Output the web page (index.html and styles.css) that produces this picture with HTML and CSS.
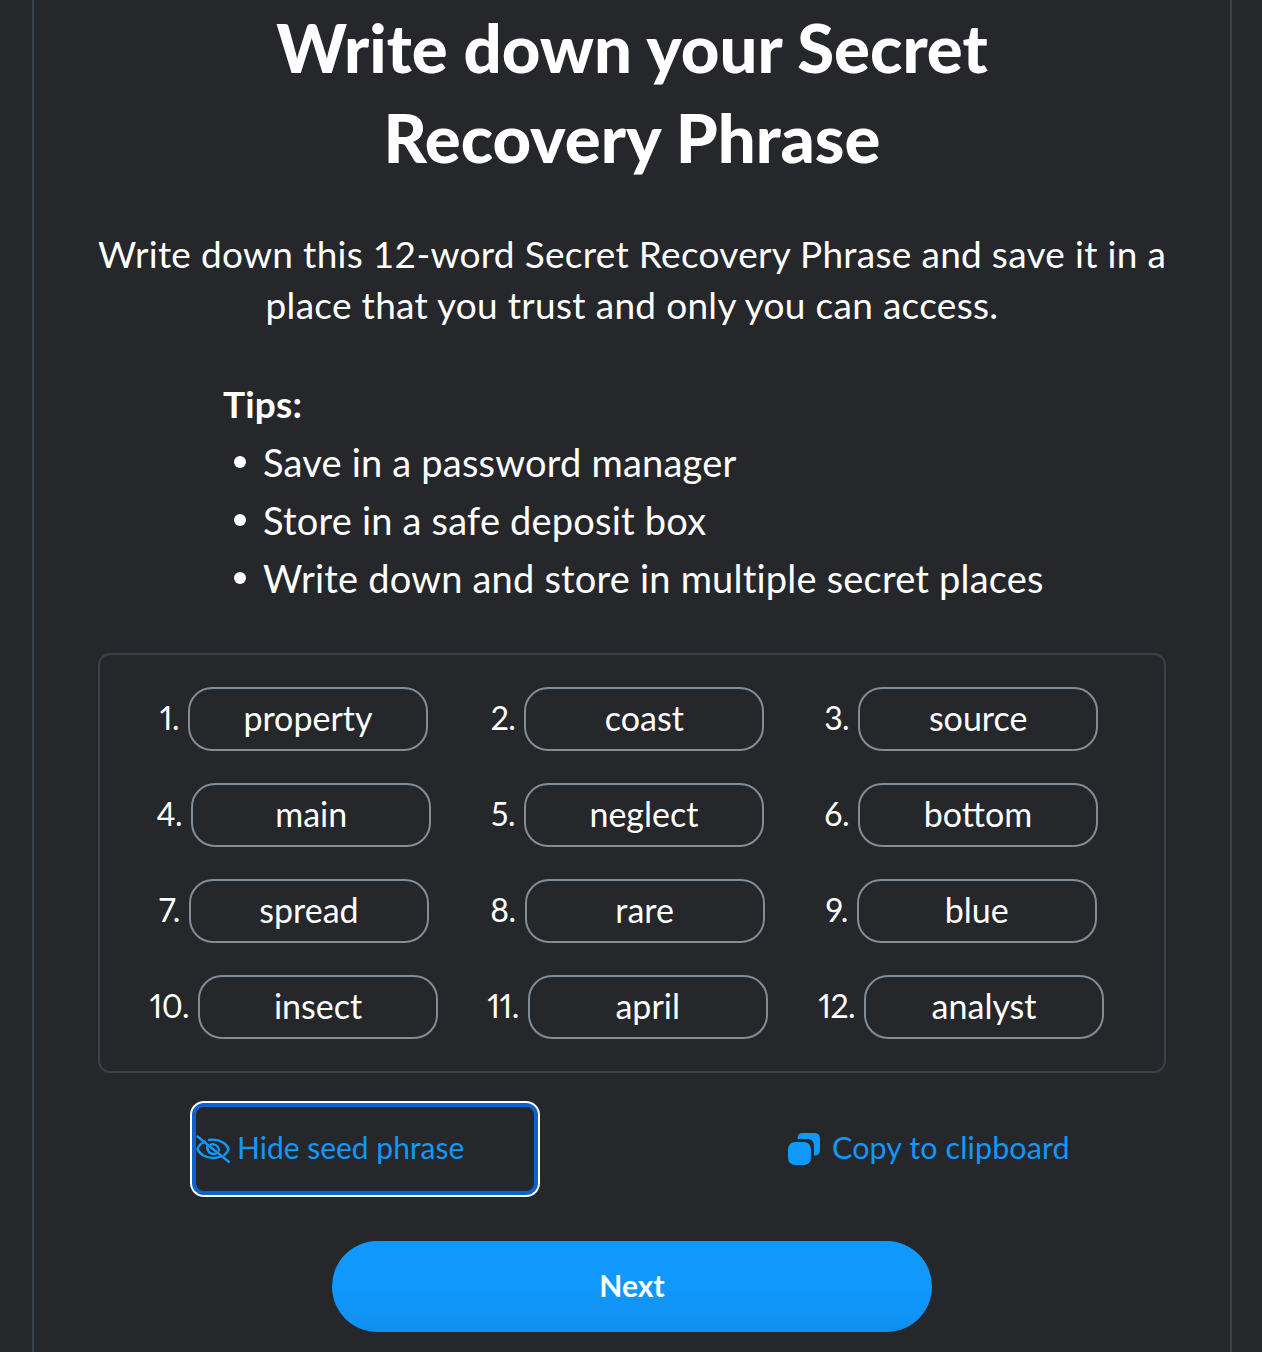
FILE: index.html
```html
<!DOCTYPE html>
<html lang="en">

<head>
    <meta charset="UTF-8">
    <meta name="viewport" content="width=device-width, initial-scale=1.0">
    <title>Write down your Secret Recovery Phrase</title>
    <link rel="stylesheet" href="styles.css">
</head>

<body>
    <div class="container">
        <h1 class="title">Write down your Secret<br>Recovery Phrase</h1>
        <p class="description">Write down this 12-word Secret Recovery Phrase and save it in a<br>place that you trust and only you can access.</p>

        <div class="tips">
            <div class="tips-title">Tips:</div>
            <ul>
                <li>Save in a password manager</li>
                <li>Store in a safe deposit box</li>
                <li>Write down and store in multiple secret places</li>
            </ul>
        </div>

        <div class="phrase-box">
            <div class="phrase-grid">
                <div class="word"><span>1.</span><div class="pill">property</div></div>
                <div class="word"><span>2.</span><div class="pill">coast</div></div>
                <div class="word"><span>3.</span><div class="pill">source</div></div>
                <div class="word"><span>4.</span><div class="pill">main</div></div>
                <div class="word"><span>5.</span><div class="pill">neglect</div></div>
                <div class="word"><span>6.</span><div class="pill">bottom</div></div>
                <div class="word"><span>7.</span><div class="pill">spread</div></div>
                <div class="word"><span>8.</span><div class="pill">rare</div></div>
                <div class="word"><span>9.</span><div class="pill">blue</div></div>
                <div class="word"><span>10.</span><div class="pill">insect</div></div>
                <div class="word"><span>11.</span><div class="pill">april</div></div>
                <div class="word"><span>12.</span><div class="pill">analyst</div></div>
            </div>
        </div>

        <div class="actions">
            <button class="link-btn hide-btn">
                <svg width="34" height="28" viewBox="0 0 34 28" fill="none" stroke="#1098fc" stroke-width="2.4" stroke-linecap="round" stroke-linejoin="round">
                    <path d="M1.5 1.5 L33 27"/>
                    <path d="M9 6.5 C4.5 8.5 2 12 1.5 14 C3 18.5 9.5 23 17 23 C20 23 22.5 22.4 24.8 21.2"/>
                    <path d="M13 5 C14.4 4.7 15.7 4.6 17 4.6 C24.5 4.6 31 9.5 32.5 14 C32 16 30.5 18.2 28.3 20"/>
                    <path d="M11.5 10.5 C10.4 14.5 13 19 17.5 19 C18.6 19 19.6 18.7 20.5 18.2"/>
                    <path d="M15 9.4 C19 8.6 23 11.5 23 15.5"/>
                </svg>
                <span class="btn-label">Hide seed phrase</span>
            </button>
            <button class="link-btn copy-btn">
                <svg width="32" height="32" viewBox="0 0 32 32" fill="#1098fc">
                    <path d="M14 0 H26 C30 0 32 2 32 6 V17 C32 20.5 30.2 22.3 26 22.8 V13 C26 8.5 23.5 6 19 6 H9.5 C10 2 11 0 14 0 Z"/>
                    <rect x="0" y="9" width="23" height="23" rx="7"/>
                </svg>
                <span class="btn-label">Copy to clipboard</span>
            </button>
        </div>

        <button class="next-btn">Next</button>
    </div>
</body>

</html>
```

FILE: styles.css
```css
* {
    margin: 0;
    padding: 0;
    box-sizing: border-box;
}

html,
body {
    height: 1352px;
    overflow: hidden;
    background-color: #25272b;
    color: #fff;
    font-family: "Lato", "Noto Sans", sans-serif;
}

.container {
    width: 1200px;
    height: 1352px;
    margin-left: 32px;
    padding-top: 2px;
    border-left: 2px solid #3b4046;
    border-right: 2px solid #3b4046;
    display: flex;
    flex-direction: column;
    align-items: center;
}

.title {
    font-size: 67px;
    line-height: 90px;
    font-weight: 900;
    text-align: center;
}

.description {
    margin-top: 46px;
    font-size: 37px;
    line-height: 51px;
    letter-spacing: .3px;
    text-align: center;
}

.tips {
    align-self: flex-start;
    margin-top: 49px;
    margin-left: 189px;
    font-size: 38px;
    letter-spacing: .2px;
}

.tips-title {
    font-size: 37px;
    font-weight: 700;
    line-height: 50px;
}

.tips ul {
    margin-top: 4px;
    padding-left: 11px;
    list-style: none;
}

.tips li {
    display: flex;
    align-items: center;
    gap: 17px;
    line-height: 58px;
}

.tips li::before {
    content: "";
    width: 12px;
    height: 12px;
    border-radius: 50%;
    background-color: #fff;
}

.phrase-box {
    align-self: flex-start;
    width: 1068px;
    height: 420px;
    margin-top: 46px;
    margin-left: 64px;
    padding: 32px 0 0 27px;
    border: 2px solid #3b4046;
    border-radius: 12px;
}

.phrase-grid {
    width: 1001px;
    display: grid;
    grid-template-columns: repeat(3, 1fr);
    row-gap: 32px;
}

.word {
    display: flex;
    justify-content: center;
    align-items: center;
    gap: 9px;
    font-size: 34px;
    font-variant-numeric: proportional-nums;
}

.word span {
    margin-bottom: 3px;
    font-size: 32px;
    letter-spacing: -.5px;
}

.pill {
    width: 240px;
    height: 64px;
    padding-bottom: 3px;
    display: flex;
    align-items: center;
    justify-content: center;
    border: 2px solid #848c96;
    border-radius: 24px;
}

.actions {
    align-self: flex-start;
    display: flex;
    align-items: center;
    margin-top: 30px;
    margin-left: 158px;
}

.link-btn {
    display: flex;
    align-items: center;
    border: none;
    background: none;
    color: #1098fc;
    font-family: inherit;
    font-size: 30.5px;
}

.btn-label {
    margin-bottom: 5px;
}

.hide-btn {
    width: 346px;
    height: 92px;
    gap: 7px;
    padding-left: 0;
    border: 4px solid #0a63cf;
    border-radius: 12px;
    outline: 2px solid #fff;
    font-size: 30px;
}

.copy-btn {
    gap: 12px;
    margin-left: 250px;
    letter-spacing: .1px;
}

.next-btn {
    align-self: flex-start;
    width: 600px;
    height: 91px;
    margin-top: 46px;
    margin-left: 298px;
    padding-bottom: 3px;
    border: none;
    border-radius: 46px;
    background: linear-gradient(#1098fc 50%, #0f90f0);
    color: #fff;
    font-family: inherit;
    font-size: 30px;
    font-weight: 700;
}
```
